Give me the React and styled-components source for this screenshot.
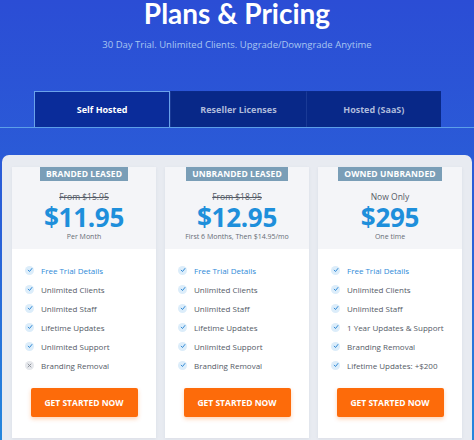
import React from 'react';
import styled, { createGlobalStyle } from 'styled-components';

const GlobalStyle = createGlobalStyle`
  * { box-sizing: border-box; }
  body {
    margin: 0;
    font-family: 'Open Sans', 'Liberation Sans', sans-serif;
    background: #ffffff;
  }
`;

const Page = styled.div`
  width: 474px;
  height: 440px;
  overflow: hidden;
  background: linear-gradient(180deg, #2b4dd5 0%, #2a62d8 55%, #2587dd 100%);
`;

const Hero = styled.header`
  display: flex;
  flex-direction: column;
  align-items: center;
`;

const Title = styled.h1`
  margin: 0;
  color: #fff;
  font-family: Lato, 'Open Sans', sans-serif;
  font-size: 28px;
  font-weight: 700;
  line-height: 26px;
`;

const Subtitle = styled.p`
  margin: 12px 0 0;
  color: #a9c6f1;
  font-size: 9.5px;
  line-height: 14px;
`;

const TabBar = styled.div`
  margin-top: 39px;
  display: flex;
  padding: 0 33px 0 34px;
  border-bottom: 1px solid #5c9fe9;
`;

const Tab = styled.div`
  flex: 1;
  height: 36px;
  display: flex;
  align-items: center;
  justify-content: center;
  font-size: 9px;
  font-weight: 700;
  color: ${({ active }) => (active ? '#ffffff' : '#aebbdb')};
  background: ${({ active }) => (active ? '#0a2c9a' : '#082888')};
  border-top: 1px solid ${({ active }) => (active ? '#6aa2ea' : '#0a2a8a')};
  border-left: 1px solid ${({ active }) => (active ? '#6aa2ea' : '#1a3a96')};
  border-right: ${({ active }) => (active ? '1px solid #6aa2ea' : 'none')};
`;

const Panel = styled.section`
  margin: 27px 2px 0;
  background: #e8ebf1;
  border-radius: 7px 7px 0 0;
  padding: 12px 10px 0 10px;
  display: grid;
  grid-template-columns: repeat(3, 144px);
  justify-content: space-between;
  height: 300px;
`;

const Card = styled.div`
  background: #fff;
  height: 271px;
  display: flex;
  flex-direction: column;
  box-shadow: 0 1px 3px rgba(60, 80, 120, 0.08);
`;

const CardHead = styled.div`
  background: #f4f5f8;
  height: 82px;
  display: flex;
  flex-direction: column;
  align-items: center;
`;

const Badge = styled.div`
  background: #7a9eb7;
  color: #fff;
  font-size: 8.5px;
  font-weight: 700;
  height: 14px;
  line-height: 14px;
  padding: 0 6px;
  letter-spacing: 0.1px;
`;

const OldPrice = styled.div`
  margin-top: 10px;
  font-size: 8.5px;
  color: #555b66;
  line-height: 11px;
  text-decoration: ${({ strike }) => (strike ? 'line-through' : 'none')};
`;

const Price = styled.div`
  margin-top: 1px;
  color: #1e8fdb;
  font-size: 26px;
  font-weight: 700;
  line-height: 28px;
  letter-spacing: -0.3px;
`;

const Note = styled.div`
  margin-top: 1px;
  font-size: 7px;
  color: #666c76;
  line-height: 9px;
`;

const Features = styled.ul`
  list-style: none;
  margin: 0;
  padding: 15px 0 0 13px;
  display: flex;
  flex-direction: column;
  gap: 7.1px;
`;

const Feature = styled.li`
  display: flex;
  align-items: center;
  gap: 7px;
  height: 12px;
  font-size: 8px;
  color: ${({ link }) => (link ? '#2f8ad8' : '#545a66')};
`;

const Mark = styled.span`
  width: 9px;
  height: 9px;
  border-radius: 50%;
  background: ${({ off }) => (off ? '#e6e8ec' : '#dcedfa')};
  display: flex;
  align-items: center;
  justify-content: center;
  flex: none;
`;

const Button = styled.button`
  margin: 17px auto 0;
  width: 107px;
  height: 29px;
  border: none;
  border-radius: 2px;
  background: #fd6b0a;
  color: #fff;
  font-family: inherit;
  font-size: 8.5px;
  font-weight: 700;
  box-shadow: 0 2px 4px rgba(253, 107, 10, 0.3);
`;

const Check = () => (
  <svg width="6" height="6" viewBox="0 0 10 10">
    <path d="M2 5.3 L4.2 7.5 L8.2 2.5" fill="none" stroke="#2c86d4" strokeWidth="1.6" strokeLinecap="round" strokeLinejoin="round" />
  </svg>
);

const Cross = () => (
  <svg width="5" height="5" viewBox="0 0 10 10">
    <path d="M2 2 L8 8 M8 2 L2 8" fill="none" stroke="#8a8f99" strokeWidth="1.8" strokeLinecap="round" />
  </svg>
);

const plans = [
  {
    badge: 'BRANDED LEASED',
    old: 'From $15.95',
    strike: true,
    price: '$11.95',
    note: 'Per Month',
    features: [
      ['Free Trial Details', true],
      ['Unlimited Clients', true],
      ['Unlimited Staff', true],
      ['Lifetime Updates', true],
      ['Unlimited Support', true],
      ['Branding Removal', false],
    ],
  },
  {
    badge: 'UNBRANDED LEASED',
    old: 'From $18.95',
    strike: true,
    price: '$12.95',
    note: 'First 6 Months, Then $14.95/mo',
    features: [
      ['Free Trial Details', true],
      ['Unlimited Clients', true],
      ['Unlimited Staff', true],
      ['Lifetime Updates', true],
      ['Unlimited Support', true],
      ['Branding Removal', true],
    ],
  },
  {
    badge: 'OWNED UNBRANDED',
    old: 'Now Only',
    strike: false,
    price: '$295',
    note: 'One time',
    features: [
      ['Free Trial Details', true],
      ['Unlimited Clients', true],
      ['Unlimited Staff', true],
      ['1 Year Updates & Support', true],
      ['Branding Removal', true],
      ['Lifetime Updates: +$200', true],
    ],
  },
];

export default function App() {
  return (
    <Page>
      <GlobalStyle />
      <Hero>
        <Title>Plans &amp; Pricing</Title>
        <Subtitle>30 Day Trial. Unlimited Clients. Upgrade/Downgrade Anytime</Subtitle>
      </Hero>
      <TabBar>
        <Tab active>Self Hosted</Tab>
        <Tab>Reseller Licenses</Tab>
        <Tab>Hosted (SaaS)</Tab>
      </TabBar>
      <Panel>
        {plans.map(plan => (
          <Card key={plan.badge}>
            <CardHead>
              <Badge>{plan.badge}</Badge>
              <OldPrice strike={plan.strike}>{plan.old}</OldPrice>
              <Price>{plan.price}</Price>
              <Note>{plan.note}</Note>
            </CardHead>
            <Features>
              {plan.features.map(([text, on], i) => (
                <Feature key={text} link={i === 0}>
                  <Mark off={!on}>{on ? <Check /> : <Cross />}</Mark>
                  {text}
                </Feature>
              ))}
            </Features>
            <Button>GET STARTED NOW</Button>
          </Card>
        ))}
      </Panel>
    </Page>
  );
}
